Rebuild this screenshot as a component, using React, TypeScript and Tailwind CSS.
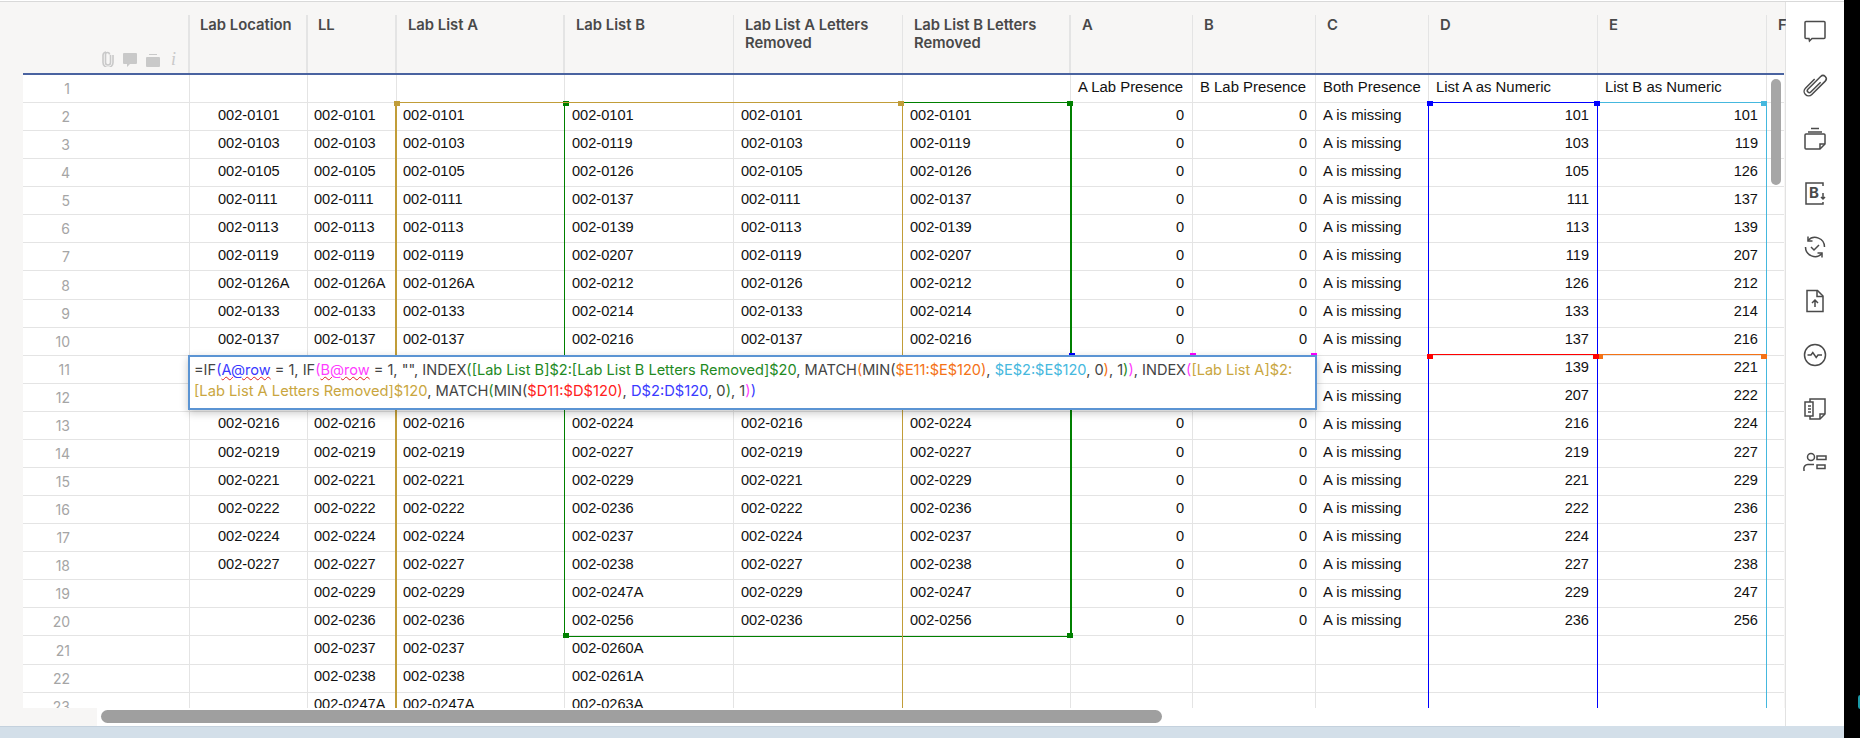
import React from 'react';

const cols = [
  'w-[118px]', 'w-[89px]', 'w-[168px]', 'w-[169px]', 'w-[169px]', 'w-[168px]',
  'w-[122px]', 'w-[123px]', 'w-[113px]', 'w-[169px]', 'w-[169px]', 'w-[17px]',
];

const headers: [string, string][] = [
  ['Lab Location', 'pl-[10px] border-r-2'],
  ['LL', 'pl-[10px] border-r-2'],
  ['Lab List A', 'pl-[11px] border-r-2'],
  ['Lab List B', 'pl-[11px] border-r'],
  ['Lab List A Letters Removed', 'pl-[11px] border-r'],
  ['Lab List B Letters Removed', 'pl-[11px] border-r-2'],
  ['A', 'pl-[11px] border-r'],
  ['B', 'pl-[11px] border-r'],
  ['C', 'pl-[11px] border-r'],
  ['D', 'pl-[11px] border-r'],
  ['E', 'pl-[11px] border-r'],
  ['F', 'pl-[11px]'],
];

const listA = ['0101', '0103', '0105', '0111', '0113', '0119', '0126A', '0133', '0137', '0139', '0207', '0216', '0219', '0221', '0222', '0224', '0227', '0229', '0236', '0237', '0238', '0247A'];
const listB = ['0101', '0119', '0126', '0137', '0139', '0207', '0212', '0214', '0216', '0221', '0222', '0224', '0227', '0229', '0236', '0237', '0238', '0247A', '0256', '0260A', '0261A', '0263A'];

const rows = Array.from({ length: 22 }, (_, i) => {
  const a = '002-' + listA[i];
  const b = '002-' + listB[i];
  const inRange = i < 19;
  // rows 11 and 12 sit under the open formula editor up to column B
  const hidden = i === 9 || i === 10;
  return {
    loc: i < 17 && !hidden ? a : '',
    ll: hidden ? '' : a,
    a: hidden ? '' : a,
    b: hidden ? '' : b,
    aClean: inRange && !hidden ? a.replace('A', '') : '',
    bClean: inRange && !hidden ? b.replace('A', '') : '',
    pa: inRange && !hidden ? '0' : '',
    pb: inRange && !hidden ? '0' : '',
    both: inRange ? 'A is missing' : '',
    na: inRange ? String(parseInt(listA[i], 10)) : '',
    nb: inRange ? String(parseInt(listB[i], 10)) : '',
  };
});

function Cell({ w, className = '', children }: { w: string; className?: string; children?: React.ReactNode }) {
  return (
    <div className={`${w} shrink-0 h-full border-r border-[#e4e4e4] flex items-center overflow-hidden whitespace-nowrap ${className}`}>
      {children}
    </div>
  );
}

function Row({ num, cells, first }: { num: number; cells: string[]; first?: boolean }) {
  const label = 'text-[14.9px] pb-[3px]';
  const digits = 'pb-[2px]';
  const right = `justify-end pr-[8px] ${digits}`;
  return (
    <div className={`flex border-b border-[#e4e4e4] bg-white ${first ? 'h-[28px]' : 'h-[28.09px]'}`}>
      <div className="w-[167px] shrink-0 h-full border-r border-[#e4e4e4] flex items-center justify-end pr-[119px] text-[14px] text-[#a5a5a5] font-['Inter',sans-serif]">
        {num}
      </div>
      <Cell w={cols[0]} className={`pl-[28px] ${digits}`}>{cells[0]}</Cell>
      <Cell w={cols[1]} className={`pl-[6px] ${digits}`}>{cells[1]}</Cell>
      <Cell w={cols[2]} className={`pl-[6px] ${digits}`}>{cells[2]}</Cell>
      <Cell w={cols[3]} className={`pl-[7px] ${digits}`}>{cells[3]}</Cell>
      <Cell w={cols[4]} className={`pl-[7px] ${digits}`}>{cells[4]}</Cell>
      <Cell w={cols[5]} className={`pl-[7px] ${digits}`}>{cells[5]}</Cell>
      <Cell w={cols[6]} className={first ? `pl-[7px] ${label}` : right}>{cells[6]}</Cell>
      <Cell w={cols[7]} className={first ? `pl-[7px] ${label}` : right}>{cells[7]}</Cell>
      <Cell w={cols[8]} className={`pl-[7px] ${label}`}>{cells[8]}</Cell>
      <Cell w={cols[9]} className={first ? `pl-[7px] ${label}` : right}>{cells[9]}</Cell>
      <Cell w={cols[10]} className={first ? `pl-[7px] ${label}` : right}>{cells[10]}</Cell>
      <div className={`${cols[11]} shrink-0`} />
    </div>
  );
}

function Handle({ className }: { className: string }) {
  return <div className={`w-[6px] h-[5px] shrink-0 ${className}`} />;
}

// reference ranges drawn over the grid while the formula is being edited
function RangeMarks() {
  return (
    <>
      {/* green: Lab List B */}
      <div className="absolute left-[564px] top-[102px] w-[508px] h-[535px] flex flex-col justify-between border-t border-l border-b border-r-2 border-[#008000]">
        <div className="flex justify-between -ml-[2px] -mr-[3px] -mt-[2px]">
          <Handle className="bg-[#008000]" />
          <Handle className="bg-[#008000]" />
        </div>
        <div className="flex justify-between -ml-[2px] -mr-[3px] -mb-[2px]">
          <Handle className="bg-[#008000]" />
          <Handle className="bg-[#008000]" />
        </div>
      </div>
      {/* gold: Lab List A */}
      <div className="absolute left-[395px] top-[102px] w-[508px] h-[606px] border-t border-l-2 border-r border-[#c19d39]">
        <div className="flex justify-between -ml-[3px] -mr-[2px] -mt-[2px]">
          <Handle className="bg-[#c19d39]" />
          <Handle className="bg-[#c19d39]" />
        </div>
      </div>
      {/* light blue: E */}
      <div className="absolute left-[1597px] top-[102px] w-[170px] h-[606px] border-t border-r border-[#45b8de]">
        <div className="flex justify-end -mr-px -mt-[2px]">
          <Handle className="bg-[#45b8de]" />
        </div>
      </div>
      {/* blue: D */}
      <div className="absolute left-[1428px] top-[102px] w-[170px] h-[606px] border-t border-l border-r border-[#0000ff]">
        <div className="flex justify-between -ml-[2px] -mr-[3px] -mt-[2px]">
          <Handle className="bg-[#0000ff]" />
          <Handle className="bg-[#0000ff]" />
        </div>
      </div>
      {/* orange and red: row 11 */}
      <div className="absolute left-[1597px] top-[355px] w-[170px] border-t border-[#f47216] flex justify-between -mt-px">
        <Handle className="bg-[#f47216] -mt-px" />
        <Handle className="bg-[#f47216] -mt-px" />
      </div>
      <div className="absolute left-[1427px] top-[355px] w-[172px] border-t border-[#ff0000] flex justify-between -mt-px">
        <Handle className="bg-[#ff0000] -mt-px" />
        <Handle className="bg-[#ff0000] -mt-px" />
      </div>
      {/* A@row and B@row handles peeking out above the editor */}
      <div className="absolute left-[1069px] top-[353px] w-[248px] flex justify-between">
        <Handle className="bg-[#0000ff]" />
        <Handle className="bg-[#ff00ff]" />
        <Handle className="bg-[#ff00ff]" />
      </div>
    </>
  );
}

const dark = 'text-[#444444]';
const blue = 'text-[#3a3aff]';
const pink = 'text-[#ff3dff]';
const green = 'text-[#1f8a1f]';
const orange = 'text-[#f47216]';
const cyan = 'text-[#45b8de]';
const gold = 'text-[#c9a640]';
const red = 'text-[#ff2020]';
const wavy = 'underline decoration-wavy decoration-[#e02020] decoration-1';

function FormulaEditor() {
  return (
    <div className="absolute left-[188px] top-[355px] w-[1129px] h-[55px] bg-white border-2 border-[#5b94d3] shadow-[0_3px_8px_rgba(0,0,0,0.22)] pl-[4px] pt-[3px] leading-[21px] font-['Inter',sans-serif] whitespace-nowrap">
      <div className="text-[14.55px]">
        <span className={dark}>=IF</span><span className={blue}>(</span><span className={`${blue} ${wavy}`}>A@row</span>
        <span className={dark}> = 1, IF</span><span className={pink}>(</span><span className={`${pink} ${wavy}`}>B@row</span>
        <span className={dark}> = 1, "", INDEX</span><span className={green}>([Lab List B]$2:[Lab List B Letters Removed]$20</span>
        <span className={dark}>, MATCH</span><span className={orange}>(</span><span className={dark}>MIN(</span><span className={orange}>$E11:$E$120)</span>
        <span className={dark}>, </span><span className={cyan}>$E$2:$E$120</span><span className={dark}>, 0</span><span className={orange}>)</span>
        <span className={dark}>, 1</span><span className={green}>)</span><span className={pink}>)</span>
        <span className={dark}>, INDEX</span><span className={pink}>(</span><span className={gold}>[Lab List A]$2:</span>
      </div>
      <div className="text-[14.7px]">
        <span className={gold}>[Lab List A Letters Removed]$120</span>
        <span className={dark}>, MATCH</span><span className={green}>(</span><span className={dark}>MIN(</span><span className={red}>$D11:$D$120)</span>
        <span className={dark}>, </span><span className={blue}>D$2:D$120</span><span className={dark}>, 0</span><span className={green}>)</span>
        <span className={dark}>, 1</span><span className={pink}>)</span><span className={blue}>)</span>
      </div>
    </div>
  );
}

function HeaderIcons() {
  return (
    <div className="w-[167px] shrink-0 h-[58px] border-r-2 border-[#e4e4e4] flex items-end justify-end pr-[11px] pb-[6px] text-[#c9c9c9]">
      <svg width="12" height="16" viewBox="0 0 12 16" fill="none" stroke="currentColor" strokeWidth="1.6" className="mr-[9px]">
        <path d="M8.500 4v7.500a2.500 2.500 0 0 1-5 0V3.500a2 2 0 0 1 4 0" />
        <path d="M11 4v7.500a5 5 0 0 1-10 0V4a3.500 3.500 0 0 1 3-3" />
      </svg>
      <svg width="14" height="14" viewBox="0 0 14 14" fill="currentColor" className="mr-[9px]">
        <path d="M1 0h12a1 1 0 0 1 1 1v9a1 1 0 0 1-1 1H7l-3 3v-3H1a1 1 0 0 1-1-1V1a1 1 0 0 1 1-1z" />
      </svg>
      <svg width="14" height="13" viewBox="0 0 14 13" fill="currentColor" className="mr-[11px]">
        <path d="M3 0h8v1H3z" />
        <path d="M1 3h12a1 1 0 0 1 1 1v8a1 1 0 0 1-1 1H1a1 1 0 0 1-1-1V4a1 1 0 0 1 1-1z" />
      </svg>
      <span className="font-['Liberation_Serif',serif] italic text-[18px] leading-[16px] w-[6px]">i</span>
    </div>
  );
}

const iconProps = {
  width: 24,
  height: 24,
  viewBox: '0 0 24 24',
  fill: 'none',
  stroke: '#4a4a4a',
  strokeWidth: 1.5,
};

function SideIcons() {
  return (
    <div className="flex flex-col items-center gap-[30px] pt-[16.5px]">
      <svg {...iconProps}>
        <path d="M2 3.500a1 1 0 0 1 1-1h18a1 1 0 0 1 1 1v15a1 1 0 0 1-1 1H9l-2.500 2.500-.5-2.500H3a1 1 0 0 1-1-1z" />
      </svg>
      <svg {...iconProps} className="overflow-visible">
        <path transform="rotate(45 12 12)" d="M14 6v14a2 2 0 0 1-4 0V2a3.250 3.250 0 0 1 6.500 0v19a4.500 4.500 0 0 1-9 0V8" />
      </svg>
      <svg {...iconProps}>
        <path d="M8 1.500h8M5 5h14" />
        <path d="M2 8a1 1 0 0 1 1-1h18a1 1 0 0 1 1 1v9l-5 5H3a1 1 0 0 1-1-1z" />
        <path d="M22 17h-5v5" />
      </svg>
      <div className="relative w-[24px] h-[24px]">
        <svg {...iconProps}>
          <path d="M20 5V2H3v21h17v-2" />
          <path d="M20 12v6m-2-2 2 2 2-2" />
        </svg>
        <span className="absolute left-[6px] top-[3px] font-['Inter',sans-serif] font-bold text-[15px] leading-[18px] text-[#4a4a4a]">B</span>
      </div>
      <svg {...iconProps}>
        <path d="M5 5.500A9.500 9.500 0 0 1 21.500 12" />
        <path d="M5 1.500V6h4.500" />
        <path d="M19 18.500A9.500 9.500 0 0 1 2.500 12" />
        <path d="M19 22.500V18h-4.500" />
        <path d="m8 12 3 3 5-5" />
      </svg>
      <svg {...iconProps}>
        <path d="M4 1.500h10.500l5.500 5.500v15.500H4z" />
        <path d="M14 1.500V7.500h6" />
        <path d="M12 18v-7m-3 3 3-3 3 3" />
      </svg>
      <svg {...iconProps}>
        <circle cx="12" cy="12" r="10.500" />
        <path d="M4.500 12H8l1.800-2.500 3.400 5 1.800-2.500h4" />
      </svg>
      <svg {...iconProps}>
        <path d="M7 5V2h15v15l-5 5H7v-3" />
        <path d="M22 17h-5v5" />
        <path d="M2 5h8v14H2z" />
        <path d="M5 9h3M5 12h3M5 15h3" />
      </svg>
      <svg {...iconProps}>
        <circle cx="8" cy="6" r="3.500" />
        <path d="M1 20v-1.500A4 4 0 0 1 5 13.500h6" />
        <path d="M14 5h9v3.500h-9zM14 14h8v3.500h-8z" />
      </svg>
    </div>
  );
}

export default function App() {
  return (
    <div className="relative flex h-[738px] w-[1860px] overflow-hidden bg-black font-['Liberation_Sans',Arial,sans-serif] text-[14.6px] text-[#111111]">
      <div className="w-[1844px] shrink-0 flex flex-col bg-white">
        <div className="h-px bg-white" />
        <div className="h-px bg-[#d9d9d9]" />
        <div className="flex h-[724px]">
          <div className="w-[1785px] shrink-0 flex flex-col relative">
            {/* column headers */}
            <div className="flex h-[71px] shrink-0 pl-[23px] pr-px items-end bg-[#f7f6f5]">
              <HeaderIcons />
              {headers.map(([title, extra], i) => (
                <div key={title} className={`${cols[i]} ${extra} shrink-0 h-[58px] border-[#e4e4e4] pt-px pr-[8px] overflow-hidden font-['Inter',sans-serif] font-semibold text-[14.8px] leading-[18px] text-[#494949] ${title === 'F' ? 'whitespace-nowrap' : ''}`}>
                  {title}
                </div>
              ))}
            </div>
            <div className="flex h-[2px] shrink-0 bg-[#f7f6f5] pl-[23px] pr-px">
              <div className="flex-1 bg-[#4a63a0]" />
            </div>
            {/* grid body */}
            <div className="h-[633px] shrink-0 flex bg-[#f7f6f5] overflow-hidden">
              <div className="w-[23px] shrink-0" />
              <div className="flex-1 mr-px">
                <Row first num={1} cells={['', '', '', '', '', '', 'A Lab Presence', 'B Lab Presence', 'Both Presence', 'List A as Numeric', 'List B as Numeric']} />
                {rows.map((r, i) => (
                  <Row key={i} num={i + 2} cells={[r.loc, r.ll, r.a, r.b, r.aClean, r.bClean, r.pa, r.pb, r.both, r.na, r.nb]} />
                ))}
              </div>
            </div>
            {/* horizontal scrollbar */}
            <div className="flex flex-1 bg-white">
              <div className="w-[97px] bg-[#f7f6f5]" />
              <div className="pl-[4px] pt-[2px]">
                <div className="w-[1061px] h-[13px] rounded-full bg-[#9f9f9f]" />
              </div>
            </div>
            <div className="absolute inset-x-0 top-[-2px] h-[710px] overflow-hidden pointer-events-none">
              <RangeMarks />
              <FormulaEditor />
              <div className="absolute left-[1771px] top-[79px] w-[10px] h-[106px] rounded-full bg-[#a6a6a6]" />
            </div>
          </div>
          <div className="flex-1 border-l border-[#e2e2e2] bg-white">
            <SideIcons />
          </div>
        </div>
        <div className="h-[12px] bg-[#d3dfe9]">
          <div className="h-px w-[1520px] bg-[#c4d1dd]" />
        </div>
      </div>
      <div className="absolute left-[1858px] top-[695px] w-[5px] h-[14px] rounded-full bg-[#1a9aa8]" />
    </div>
  );
}
